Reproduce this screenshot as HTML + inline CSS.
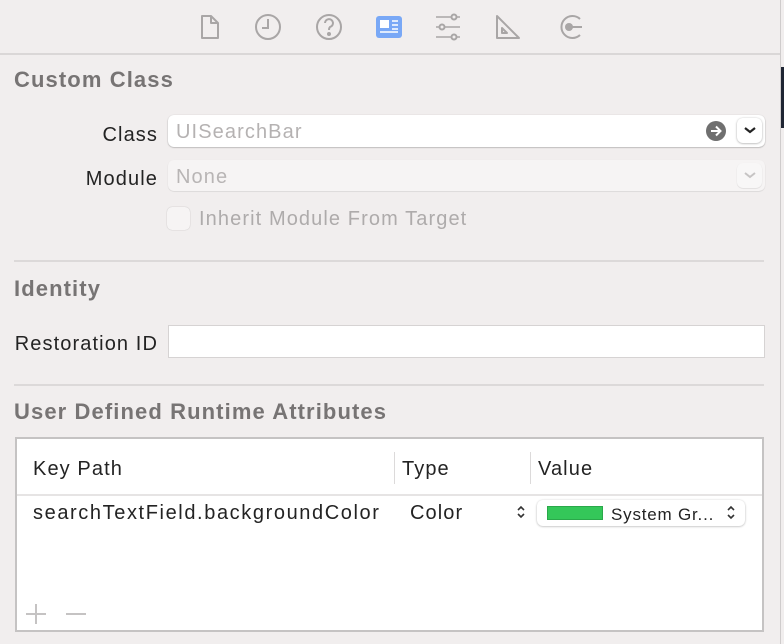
<!DOCTYPE html>
<html><head><meta charset="utf-8"><style>
*{margin:0;padding:0;box-sizing:border-box}
body{width:784px;height:644px;background:#f1eeee;font-family:"Liberation Sans",sans-serif;position:relative;overflow:hidden;color:#232323}
.a{position:absolute}
.h{font-weight:bold;font-size:22px;letter-spacing:1.1px;color:#777474;left:14px}
.lbl{text-align:right;left:0;letter-spacing:0.6px}
.hr{position:absolute;left:14px;width:750px;height:2px;background:#dcd9d9}
.field{position:absolute;background:#fff;border-radius:6px;box-shadow:0 0.5px 1.5px rgba(0,0,0,.35)}
.t{font-size:20px;letter-spacing:1.1px;white-space:nowrap;line-height:1}
</style></head><body>
<svg class="a" style="left:0;top:0" width="784" height="56" fill="none" stroke="#a9a6a6" stroke-width="2">
<path d="M202 16h9l7 7v15h-16z M211 16v7h7" stroke-linejoin="round"/>
<circle cx="268" cy="27" r="12"/><path d="M268 19v9h-6"/>
<circle cx="329" cy="27" r="12"/><path d="M325 23a4 4 0 1 1 5 4q-1 1-1 3"/><circle cx="329" cy="34" r="1" fill="#a9a6a6"/>
<rect x="376" y="16" width="26" height="22" rx="3" fill="#79a8f6" stroke="none"/>
<rect x="380" y="20" width="9" height="8" fill="#fff" stroke="none"/>
<path d="M392 21h6M392 25h6M392 29h6M380 32h18" stroke="#fff" stroke-width="1.6"/>
<path d="M436 17h24M436 27h24M436 37h24" stroke-width="1.6"/>
<circle cx="454" cy="17" r="2.5" fill="#f1eeee"/><circle cx="442" cy="27" r="2.5" fill="#f1eeee"/><circle cx="454" cy="37" r="2.5" fill="#f1eeee"/>
<path d="M497 16v22h22z M502 28v5h5z" stroke-linejoin="round"/>
<path d="M580 19a11 11 0 1 0 0 16" /><circle cx="569" cy="27" r="4" fill="#a9a6a6" stroke="none"/><path d="M569 27h13"/>
</svg>
<div class="a" style="left:0;top:53px;width:780px;height:2px;background:#dad7d7"></div>
<div class="a" style="left:780px;top:0;width:1px;height:644px;background:#cfcccc"></div>
<div class="a" style="left:781px;top:67px;width:3px;height:61px;background:#1f2533"></div>

<div class="a h" style="top:67px">Custom Class</div>
<div class="a lbl t" style="top:125px;right:626px">Class</div>
<div class="field" style="left:168px;top:115px;width:597px;height:32px"></div>
<div class="a t" style="left:176px;top:122px;color:#b5b2b2">UISearchBar</div>
<svg class="a" style="left:706px;top:121px" width="20" height="20"><circle cx="10" cy="10" r="10" fill="#6f6f6f"/><path d="M5 10h9M10 5.5l4.5 4.5-4.5 4.5" stroke="#fff" stroke-width="2" fill="none"/></svg>
<div class="field" style="left:737px;top:118px;width:25px;height:25px;box-shadow:0 0.5px 2px rgba(0,0,0,.35)"></div>
<svg class="a" style="left:743px;top:125px" width="14" height="10"><path d="M2 3l5 4 5-4" stroke="#222" stroke-width="2.2" fill="none"/></svg>

<div class="a lbl t" style="top:169px;right:626px">Module</div>
<div class="field" style="left:168px;top:160px;width:597px;height:31px;background:#f6f4f4;box-shadow:0 0.5px 1px rgba(0,0,0,.15)"></div>
<div class="a t" style="left:176px;top:167px;color:#b8b5b5">None</div>
<div class="field" style="left:737px;top:163px;width:25px;height:25px;background:#f8f7f7;box-shadow:0 0.5px 1px rgba(0,0,0,.15)"></div>
<svg class="a" style="left:743px;top:170px" width="14" height="10"><path d="M2 3l5 4 5-4" stroke="#c6c4c4" stroke-width="2" fill="none"/></svg>
<div class="a" style="left:167px;top:207px;width:23px;height:23px;border-radius:5px;background:#f6f4f4;box-shadow:0 0 1px rgba(0,0,0,.3)"></div>
<div class="a t" style="left:199px;top:209px;color:#aeabab">Inherit Module From Target</div>

<div class="hr" style="top:260px"></div>
<div class="a h" style="top:276px">Identity</div>
<div class="a lbl t" style="top:334px;right:626px">Restoration ID</div>
<div class="a" style="left:168px;top:325px;width:597px;height:33px;background:#fff;border:1px solid #d6d3d3"></div>
<div class="hr" style="top:384px"></div>
<div class="a h" style="top:399px">User Defined Runtime Attributes</div>

<div class="a" style="left:15px;top:437px;width:749px;height:195px;background:#fff;border:2px solid #c5c3c3"></div>
<div class="a t" style="left:33px;top:459px">Key Path</div>
<div class="a t" style="left:402px;top:459px">Type</div>
<div class="a t" style="left:538px;top:459px">Value</div>
<div class="a" style="left:394px;top:452px;width:1px;height:32px;background:#dcdada"></div>
<div class="a" style="left:530px;top:452px;width:1px;height:32px;background:#dcdada"></div>
<div class="a" style="left:17px;top:494px;width:745px;height:2px;background:#e6e4e4"></div>
<div class="a t" style="left:33px;top:503px;letter-spacing:1.6px">searchTextField.backgroundColor</div>
<div class="a t" style="left:410px;top:503px">Color</div>
<svg class="a" style="left:515px;top:503px" width="12" height="18"><path d="M3 7l3-3 3 3M3 11l3 3 3-3" stroke="#333" stroke-width="1.6" fill="none"/></svg>
<div class="field" style="left:537px;top:500px;width:208px;height:26px;box-shadow:0 0.5px 2px rgba(0,0,0,.3)"></div>
<div class="a" style="left:547px;top:506px;width:56px;height:14px;background:#34c759;border:1px solid #2aa84a"></div>
<div class="a" style="left:611px;top:505px;font-size:17px;letter-spacing:0.8px;white-space:nowrap">System Gr...</div>
<svg class="a" style="left:725px;top:504px" width="12" height="18"><path d="M3 6l3-3 3 3M3 11l3 3 3-3" stroke="#333" stroke-width="1.6" fill="none"/></svg>
<svg class="a" style="left:24px;top:602px" width="70" height="24"><path d="M12 2v20M2 12h20M42 12h20" stroke="#c5c3c3" stroke-width="2"/></svg>
</body></html>
